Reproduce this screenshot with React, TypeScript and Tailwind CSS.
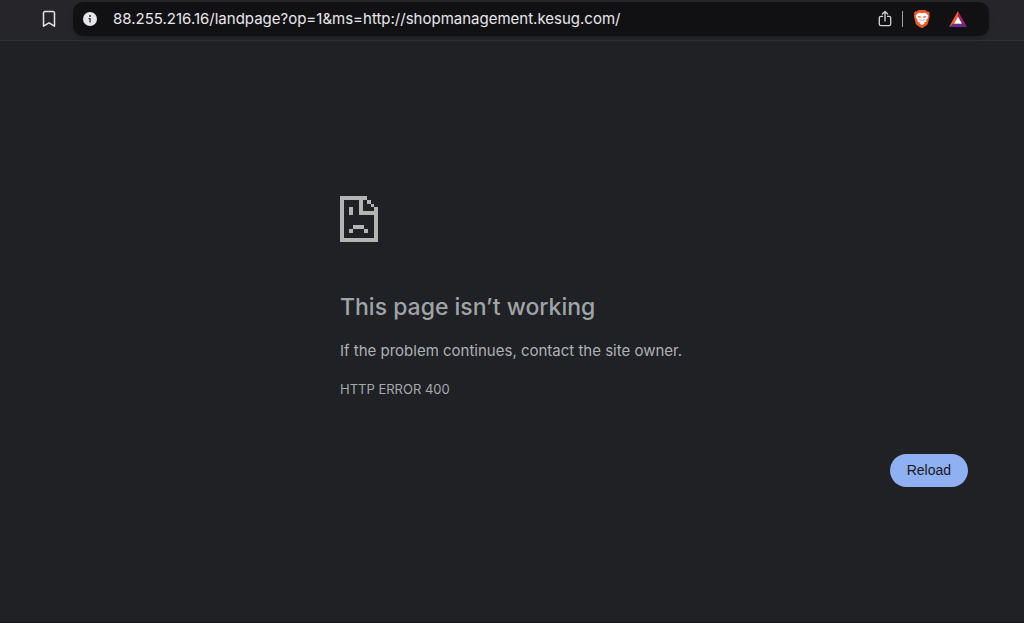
import { useState } from 'react';

const BookmarkIcon = () => (
  <svg width="14" height="18" viewBox="0 0 14 18" fill="none" className="block">
    <path
      d="M3 1.5h8a1.5 1.5 0 0 1 1.5 1.5v13.2L7 12.8l-5.5 3.4V3A1.5 1.5 0 0 1 3 1.5Z"
      stroke="#e4e4e8"
      strokeWidth="1.5"
      strokeLinejoin="round"
    />
  </svg>
);

const InfoIcon = () => (
  <svg width="14" height="14" viewBox="0 0 14 14" className="block">
    <circle cx="7" cy="7" r="7" fill="#e6e6ea" />
    <circle cx="7" cy="3.9" r="1" fill="#303034" />
    <path d="M5.6 6.1h2.1v4.5H6.4V7.2h-.8Z" fill="#303034" />
  </svg>
);

const ShareIcon = () => (
  <svg width="14" height="18" viewBox="0 0 14 18" fill="none" className="block">
    <path
      d="M4.6 6.3H3A1.7 1.7 0 0 0 1.3 8v6A1.7 1.7 0 0 0 3 15.7h8a1.7 1.7 0 0 0 1.7-1.7V8A1.7 1.7 0 0 0 11 6.3H9.4M7 11V1.6M4.4 4 7 1.4 9.6 4"
      stroke="#d4d4d8"
      strokeWidth="1.3"
      strokeLinecap="round"
      strokeLinejoin="round"
    />
  </svg>
);

const BraveIcon = () => (
  <svg width="18" height="20" viewBox="0 0 18 20" className="block">
    <path
      d="M5.6 1h6.8l1.4 1.4 1.4-.2 1.6 1.9-.5 1.5.5 1.5-1.9 7.3c-.3 1-.8 1.6-1.6 2.2L10 18.7c-.7.5-1.3.5-2 0l-3.7-2.1c-.8-.6-1.3-1.2-1.6-2.2L.8 7.1l.5-1.5-.5-1.5 1.6-1.9 1.4.2Z"
      fill="#f1562b"
    />
    <path
      d="M9 4.3 11.2 3.8l2 .4 2.2 2.6-.6 2.3-1.5 2 .3 1.5-1.9 1-1-.5.9 1.3L9 16l-2.6-1.6.9-1.3-1 .5-1.9-1 .3-1.5-1.5-2-.6-2.3 2.2-2.6 2-.4Z"
      fill="#fff"
    />
    <path
      d="m4.6 6.9 3.2.7v.8l-1.9.3ZM13.4 6.9l-3.2.7v.8l1.9.3ZM6.3 10.1l1.5.6-.7 1.3ZM11.7 10.1l-1.5.6.7 1.3ZM8.1 11.2h1.8l-.9.9Z"
      fill="#f1562b"
    />
  </svg>
);

const RewardsIcon = () => (
  <svg width="18" height="16" viewBox="0 0 18 16" className="block">
    <path d="M9 0 0 16l5-3.3L9 5.5Z" fill="#ff5a2a" />
    <path d="m9 0 9 16-5-3.3-4-7.2Z" fill="#9e1f63" />
    <path d="M0 16h18l-5-3.5H5Z" fill="#662d91" />
    <path d="m9 5.5 4 7.2H5Z" fill="#fff" />
  </svg>
);

const SadPageIcon = () => (
  <svg
    width="38"
    height="46"
    viewBox="0 0 38 46"
    fill="#b2b5b2"
    shapeRendering="crispEdges"
    className="block"
  >
    <path d="M0 0h27v4h-4v11h11v-4h4v35H0ZM4 4v38h30V19H19V4Z" fillRule="evenodd" />
    <path d="M27 4h4v4h-4ZM31 8h3v3h-3Z" />
    <path d="M9 11h4v8H9ZM13 29h11v4H13ZM9 33h4v4H9ZM24 33h4v4h-4Z" />
  </svg>
);

const AddressBar = () => {
  const [url, setUrl] = useState('88.255.216.16/landpage?op=1&ms=http://shopmanagement.kesug.com/');

  return (
    <div className="flex h-[34px] min-w-0 flex-1 items-center rounded-[10px] bg-[#111113] pr-[22px] pl-2.5 shadow-md">
      <button type="button" aria-label="Site information">
        <InfoIcon />
      </button>
      <input
        type="text"
        aria-label="Address"
        spellCheck={false}
        value={url}
        onChange={(e) => setUrl(e.target.value)}
        className="ml-4 h-8 min-w-0 flex-1 bg-transparent pb-0.5 text-[15px] text-[#e8e8ec] outline-none"
      />
      <button type="button" aria-label="Share">
        <ShareIcon />
      </button>
      <span className="mx-2.5 h-4 w-px bg-[#a0a0a4]" />
      <button type="button" aria-label="Shields">
        <BraveIcon />
      </button>
      <button type="button" aria-label="Rewards" className="ml-[18px]">
        <RewardsIcon />
      </button>
    </div>
  );
};

const ErrorPage = () => (
  <main className="flex-1 border-b border-[#17171b] pt-[155px] pr-14 pl-[340px]">
    <SadPageIcon />
    <h1 className="mt-[49px] text-[23px] leading-8 font-medium text-[#9fa4a8]">
      This page isn’t working
    </h1>
    <p className="mt-4 text-[15px] leading-6 text-[#adb1b5]">
      If the problem continues, contact the site owner.
    </p>
    <p className="mt-4 text-[13px] leading-5 text-[#a4a9ae]">HTTP ERROR 400</p>
    <div className="mt-[55px] flex justify-end">
      <button
        type="button"
        className="h-[33px] rounded-full bg-[#8fb1f3] px-[17px] pb-px font-['Liberation_Sans',sans-serif] text-sm text-[#17181b]"
        onClick={() => window.location.reload()}
      >
        Reload
      </button>
    </div>
  </main>
);

export default function App() {
  return (
    <div className="flex min-h-screen flex-col bg-[#202124] font-[Inter,sans-serif]">
      <header className="flex items-center gap-[17px] border-b border-[#303034] bg-[#25252a] pt-0.5 pr-[35px] pb-1 pl-[42px]">
        <button type="button" aria-label="Bookmark this page">
          <BookmarkIcon />
        </button>
        <AddressBar />
      </header>
      <ErrorPage />
    </div>
  );
}
